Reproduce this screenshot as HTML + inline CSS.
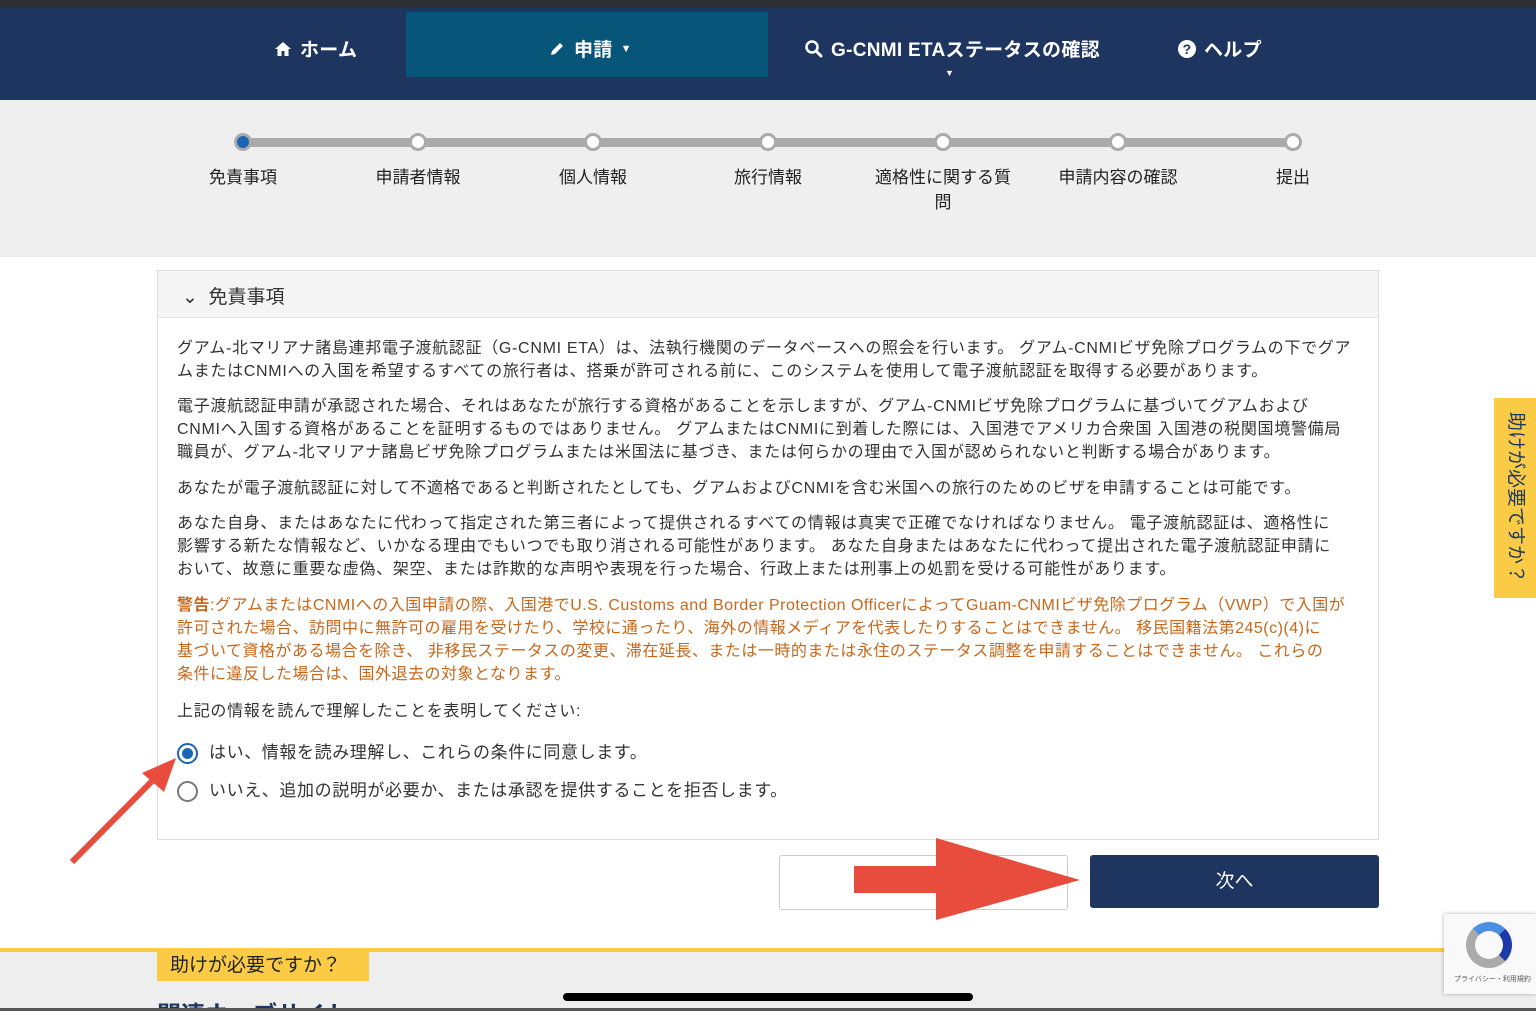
<!DOCTYPE html>
<html style="width:1536px;height:1011px;overflow:hidden"><head><meta charset="utf-8"><style>
*{margin:0;padding:0;box-sizing:border-box}
body{width:1536px;height:1011px;overflow:hidden;background:#fff;font-family:"Liberation Sans","Noto Sans CJK JP",sans-serif;color:#333;position:relative}
#r{position:absolute;left:0;top:0;width:1536px;height:1011px;overflow:hidden}
.a{position:absolute;white-space:nowrap}
.nav{position:absolute;left:0;top:8px;width:1536px;height:92px;background:#1d355f;box-shadow:0 3px 6px rgba(0,0,0,.35)}
.nt{position:absolute;color:#fff;font-size:19px;top:27px;font-weight:bold;letter-spacing:0.3px;display:flex;align-items:center;gap:8px}
.step{position:absolute;top:133px;width:18px;height:18px;border-radius:50%;background:#fff;border:3px solid #aaa}
.sl{position:absolute;top:165px;font-size:17px;color:#222;text-align:center;width:160px;line-height:25px}
.p{font-size:16px;line-height:23px;color:#333;letter-spacing:0.7px}
.w{color:#c8671a;letter-spacing:0.5px}
</style></head><body><div id="r">
<div class="a" style="left:0;top:0;width:1536px;height:8px;background:#2e3236"></div>
<div class="nav">
 <div class="a" style="left:406px;top:4px;width:362px;height:65px;background:#075578"></div>
 <div class="nt" style="left:274px"><svg width="18" height="16" viewBox="0 0 18 16"><path d="M9 1L1 8h2.5v7h4v-5h3v5h4V8H17z" fill="#fff"/></svg>ホーム</div>
 <div class="nt" style="left:548px"><svg width="18" height="18" viewBox="0 0 18 18"><path d="M3 15l1-4 8-8 3 3-8 8z" fill="#fff"/></svg>申請<span style="font-size:11px">▼</span></div>
 <div class="nt" style="left:804px"><svg width="19" height="19" viewBox="0 0 19 19"><circle cx="8" cy="8" r="5.5" stroke="#fff" stroke-width="2.6" fill="none"/><path d="M12 12l5 5" stroke="#fff" stroke-width="3" stroke-linecap="round"/></svg>G-CNMI ETAステータスの確認</div>
 <div class="a" style="left:945px;top:60px;color:#fff;font-size:9px">▼</div>
 <div class="nt" style="left:1178px"><span style="display:inline-block;width:18px;height:18px;border-radius:50%;background:#fff;color:#1d355f;font-size:14px;line-height:18px;text-align:center">?</span>ヘルプ</div>
</div>
<div class="a" style="left:0;top:100px;width:1536px;height:157px;background:#efefef"></div>
<div class="a" style="left:243px;top:138px;width:1050px;height:9px;background:#aaa"></div>
<div class="step" style="left:234px;background:#1a64b4"></div>
<div class="step" style="left:409px"></div>
<div class="step" style="left:584px"></div>
<div class="step" style="left:759px"></div>
<div class="step" style="left:934px"></div>
<div class="step" style="left:1109px"></div>
<div class="step" style="left:1284px"></div>
<div class="sl" style="left:163px">免責事項</div>
<div class="sl" style="left:338px">申請者情報</div>
<div class="sl" style="left:513px">個人情報</div>
<div class="sl" style="left:688px">旅行情報</div>
<div class="sl" style="left:863px">適格性に関する質<br>問</div>
<div class="sl" style="left:1038px">申請内容の確認</div>
<div class="sl" style="left:1213px">提出</div>

<div class="a" style="left:157px;top:270px;width:1222px;height:570px;border:1px solid #ddd;background:#fff"></div>
<div class="a" style="left:158px;top:271px;width:1220px;height:47px;background:#f5f5f5;border-bottom:1px solid #e3e3e3"></div>
<div class="a" style="left:182px;top:282px;font-size:19px;color:#333">⌄&nbsp; 免責事項</div>

<div class="a p" style="left:177px;top:337px">グアム-北マリアナ諸島連邦電子渡航認証（G-CNMI ETA）は、法執行機関のデータベースへの照会を行います。 グアム-CNMIビザ免除プログラムの下でグア<br>ムまたはCNMIへの入国を希望するすべての旅行者は、搭乗が許可される前に、このシステムを使用して電子渡航認証を取得する必要があります。</div>
<div class="a p" style="left:177px;top:395px">電子渡航認証申請が承認された場合、それはあなたが旅行する資格があることを示しますが、グアム-CNMIビザ免除プログラムに基づいてグアムおよび<br>CNMIへ入国する資格があることを証明するものではありません。 グアムまたはCNMIに到着した際には、入国港でアメリカ合衆国 入国港の税関国境警備局<br>職員が、グアム-北マリアナ諸島ビザ免除プログラムまたは米国法に基づき、または何らかの理由で入国が認められないと判断する場合があります。</div>
<div class="a p" style="left:177px;top:477px">あなたが電子渡航認証に対して不適格であると判断されたとしても、グアムおよびCNMIを含む米国への旅行のためのビザを申請することは可能です。</div>
<div class="a p" style="left:177px;top:512px">あなた自身、またはあなたに代わって指定された第三者によって提供されるすべての情報は真実で正確でなければなりません。 電子渡航認証は、適格性に<br>影響する新たな情報など、いかなる理由でもいつでも取り消される可能性があります。 あなた自身またはあなたに代わって提出された電子渡航認証申請に<br>おいて、故意に重要な虚偽、架空、または詐欺的な声明や表現を行った場合、行政上または刑事上の処罰を受ける可能性があります。</div>
<div class="a p w" style="left:177px;top:594px"><b>警告</b>:グアムまたはCNMIへの入国申請の際、入国港でU.S. Customs and Border Protection OfficerによってGuam-CNMIビザ免除プログラム（VWP）で入国が<br>許可された場合、訪問中に無許可の雇用を受けたり、学校に通ったり、海外の情報メディアを代表したりすることはできません。 移民国籍法第245(c)(4)に<br>基づいて資格がある場合を除き、 非移民ステータスの変更、滞在延長、または一時的または永住のステータス調整を申請することはできません。 これらの<br>条件に違反した場合は、国外退去の対象となります。</div>
<div class="a p" style="left:177px;top:700px">上記の情報を読んで理解したことを表明してください:</div>
<div class="a" style="left:177px;top:743px;width:21px;height:21px;border-radius:50%;border:2px solid #1a64b4;background:#fff"><div style="position:absolute;left:3px;top:3px;width:11px;height:11px;border-radius:50%;background:#1a64b4"></div></div>
<div class="a p" style="left:209px;top:741px;font-size:17px;letter-spacing:0.6px">はい、情報を読み理解し、これらの条件に同意します。</div>
<div class="a" style="left:177px;top:781px;width:21px;height:21px;border-radius:50%;border:2px solid #777;background:#fff"></div>
<div class="a p" style="left:209px;top:779px;font-size:17px;letter-spacing:0.6px">いいえ、追加の説明が必要か、または承認を提供することを拒否します。</div>

<div class="a" style="left:779px;top:855px;width:289px;height:55px;border:1px solid #ccc;border-radius:3px;background:#fff"></div>
<div class="a" style="left:1090px;top:855px;width:289px;height:53px;background:#1d355f;border-radius:3px;color:#fff;font-size:19px;text-align:center;line-height:53px">次へ</div>
<svg class="a" style="left:0;top:0" width="1536" height="1011">
 <polygon points="854,866 936,866 936,838 1080,880 936,920 936,893 854,893" fill="#e84c3d"/>
 <line x1="72" y1="862" x2="160" y2="773" stroke="#e84c3d" stroke-width="6"/>
 <polygon points="176,758 142,773 164,792" fill="#e84c3d"/>
</svg>

<div class="a" style="left:1494px;top:398px;width:42px;height:200px;background:#fccb45;color:#1d3a5f;font-size:19px;writing-mode:vertical-rl;text-orientation:sideways;line-height:42px;text-align:center">助けが必要ですか？</div>

<div class="a" style="left:0;top:948px;width:1536px;height:63px;background:#eee;border-top:4px solid #fccb45"></div>
<div class="a" style="left:157px;top:952px;width:212px;height:29px;background:#fccb45;font-size:19px;color:#222;line-height:28px;padding-left:13px">助けが必要ですか？</div>
<div class="a" style="left:157px;top:1001px;font-size:24px;line-height:30px;color:#1d355f;font-weight:bold">関連ウェブサイト</div>
<div class="a" style="left:563px;top:993px;width:410px;height:8px;border-radius:4px;background:#000"></div>
<div class="a" style="left:0;top:1008px;width:1536px;height:3px;background:#555"></div>
<div class="a" style="left:1444px;top:914px;width:92px;height:80px;background:#f9f9f9;box-shadow:0 0 4px rgba(0,0,0,.3)">
 <div style="position:absolute;left:22px;top:8px;width:46px;height:46px;border-radius:50%;border:9px solid #aaa;border-top-color:#4a90e2;border-right-color:#1c3aa9"></div>
 <div style="position:absolute;left:10px;top:60px;font-size:7px;color:#555;white-space:nowrap">プライバシー・利用規約</div>
</div>
</div></body></html>
